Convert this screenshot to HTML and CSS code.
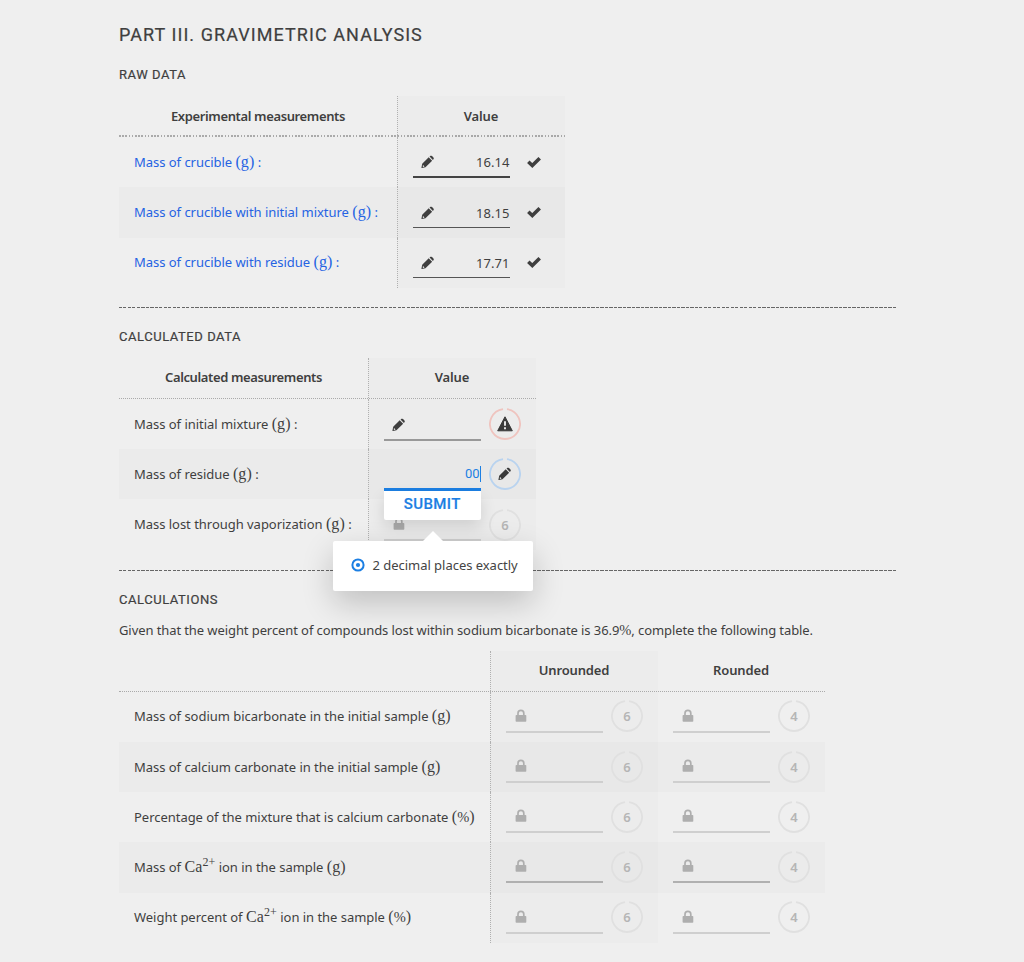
FILE: index.html
```html
<!DOCTYPE html>
<html lang="en">
<head>
<meta charset="utf-8">
<title>Gravimetric Analysis</title>
<link rel="stylesheet" href="styles.css">
</head>
<body>
<svg class="defs" width="0" height="0">
  <symbol id="pencil" viewBox="0 0 14 14"><path fill="currentColor" d="M8.3 2 12 5.7 4.8 12.7 1 13.5Q.4 13.5.5 12.9L1.3 9ZM9.2 1.2 10.2.4Q11.1-.1 11.9.6L13.4 2.1Q14.1 2.9 13.6 3.8L12.8 4.8Z"/><path d="m2.2 10.3 1.6 1.6-1.4.4-.6-.6Z" fill="#eee"/></symbol>
  <symbol id="check" viewBox="0 0 14 12"><path d="M1.3 5.8 5.3 9.5 12.7 2.3" fill="none" stroke="currentColor" stroke-width="3.6"/></symbol>
  <symbol id="lock" viewBox="0 0 12 14"><path d="M3 7V4.2a2.8 2.8 0 0 1 5.8 0V7" fill="none" stroke="currentColor" stroke-width="1.7"/><rect x=".6" y="6" width="10.7" height="6.8" rx=".8" fill="currentColor"/></symbol>
  <symbol id="warn" viewBox="0 0 16 16"><path d="M8 .8 15.3 14.8H.7Z" fill="currentColor" stroke="currentColor" stroke-linejoin="round"/><path d="M8 5.2v4.5M8 11.2v2" stroke="#ededed" stroke-width="1.9"/></symbol>
  <symbol id="ring" viewBox="0 0 32 32"><path d="M18 1.15A15 15 0 1 1 14 1.15" fill="none" stroke="currentColor" stroke-width="1.8"/></symbol>
</svg>
<main class="page">
  <h1 class="title">PART III. GRAVIMETRIC ANALYSIS</h1>

  <section>
    <h2 class="heading">RAW DATA</h2>
    <div class="table table-raw">
      <div class="row head"><div class="label">Experimental measurements</div><div class="value shade">Value</div></div>
      <div class="row"><div class="label link">Mass of crucible <span class="m">(g)</span> :</div><div class="value shade"><span class="field dark"><svg class="pencil"><use href="#pencil"/></svg>16.14</span><span class="badge"><svg class="check"><use href="#check"/></svg></span></div></div>
      <div class="row"><div class="label link">Mass of crucible with initial mixture <span class="m">(g)</span> :</div><div class="value shade"><span class="field thin"><svg class="pencil"><use href="#pencil"/></svg>18.15</span><span class="badge"><svg class="check"><use href="#check"/></svg></span></div></div>
      <div class="row"><div class="label link">Mass of crucible with residue <span class="m">(g)</span> :</div><div class="value shade"><span class="field thin"><svg class="pencil"><use href="#pencil"/></svg>17.71</span><span class="badge"><svg class="check"><use href="#check"/></svg></span></div></div>
    </div>
  </section>

  <section class="section calculated">
    <h2 class="heading">CALCULATED DATA</h2>
    <div class="table table-calc">
      <div class="row head"><div class="label">Calculated measurements</div><div class="value shade">Value</div></div>
      <div class="row"><div class="label">Mass of initial mixture <span class="m">(g)</span> :</div><div class="value shade"><span class="field gray"><svg class="pencil"><use href="#pencil"/></svg></span><span class="badge"><svg class="ring red"><use href="#ring"/></svg><svg class="warn"><use href="#warn"/></svg></span></div></div>
      <div class="row"><div class="label">Mass of residue <span class="m">(g)</span> :</div><div class="value shade"><span class="field active">00<i class="caret"></i>
        <span class="submit">SUBMIT</span>
        <span class="tip"><svg class="target" viewBox="0 0 14 14"><circle cx="7" cy="7" r="5.6" fill="none" stroke="#1c7fe3" stroke-width="2"/><circle cx="7" cy="7" r="2.1" fill="#1c7fe3"/></svg>2 decimal places exactly</span></span><span class="badge"><svg class="ring blue"><use href="#ring"/></svg><svg class="pencil"><use href="#pencil"/></svg></span></div></div>
      <div class="row"><div class="label">Mass lost through vaporization <span class="m">(g)</span> :</div><div class="value shade"><span class="field locked"><svg class="lock"><use href="#lock"/></svg></span><span class="badge"><svg class="ring"><use href="#ring"/></svg>6</span></div></div>
    </div>
  </section>

  <section class="section calculations">
    <h2 class="heading">CALCULATIONS</h2>
    <p class="given">Given that the weight percent of compounds lost within sodium bicarbonate is 36.9<span class="m pct">%</span>, complete the following table.</p>
    <div class="table table-final">
      <div class="row head"><div class="label"></div><div class="value shade">Unrounded</div><div class="value second">Rounded</div></div>
      <div class="row"><div class="label">Mass of sodium bicarbonate in the initial sample <span class="m">(g)</span></div><div class="value shade"><span class="field locked"><svg class="lock"><use href="#lock"/></svg></span><span class="badge"><svg class="ring"><use href="#ring"/></svg>6</span></div><div class="value second"><span class="field locked"><svg class="lock"><use href="#lock"/></svg></span><span class="badge"><svg class="ring"><use href="#ring"/></svg>4</span></div></div>
      <div class="row"><div class="label">Mass of calcium carbonate in the initial sample <span class="m">(g)</span></div><div class="value shade"><span class="field locked"><svg class="lock"><use href="#lock"/></svg></span><span class="badge"><svg class="ring"><use href="#ring"/></svg>6</span></div><div class="value second"><span class="field locked"><svg class="lock"><use href="#lock"/></svg></span><span class="badge"><svg class="ring"><use href="#ring"/></svg>4</span></div></div>
      <div class="row"><div class="label">Percentage of the mixture that is calcium carbonate <span class="m">(<span class="pct">%</span>)</span></div><div class="value shade"><span class="field locked"><svg class="lock"><use href="#lock"/></svg></span><span class="badge"><svg class="ring"><use href="#ring"/></svg>6</span></div><div class="value second"><span class="field locked"><svg class="lock"><use href="#lock"/></svg></span><span class="badge"><svg class="ring"><use href="#ring"/></svg>4</span></div></div>
      <div class="row"><div class="label">Mass of <span class="m">Ca<sup>2+</sup></span> ion in the sample <span class="m">(g)</span></div><div class="value shade"><span class="field locked strong"><svg class="lock"><use href="#lock"/></svg></span><span class="badge"><svg class="ring"><use href="#ring"/></svg>6</span></div><div class="value second"><span class="field locked strong"><svg class="lock"><use href="#lock"/></svg></span><span class="badge"><svg class="ring"><use href="#ring"/></svg>4</span></div></div>
      <div class="row"><div class="label">Weight percent of <span class="m">Ca<sup>2+</sup></span> ion in the sample <span class="m">(<span class="pct">%</span>)</span></div><div class="value shade"><span class="field locked"><svg class="lock"><use href="#lock"/></svg></span><span class="badge"><svg class="ring"><use href="#ring"/></svg>6</span></div><div class="value second"><span class="field locked"><svg class="lock"><use href="#lock"/></svg></span><span class="badge"><svg class="ring"><use href="#ring"/></svg>4</span></div></div>
    </div>
  </section>
</main>
</body>
</html>
```
FILE: styles.css
```css
* { box-sizing: border-box; }
body { margin: 0; background: #efefef; color: #3f3f3f; font: 13px/20px "Noto Sans", sans-serif; }
.defs { position: absolute; }
.page { width: 777px; margin-left: 119px; padding-top: 23px; height: 962px; overflow: visible; }
.title { margin: 0; font: 400 18px/24px Roboto, sans-serif; letter-spacing: 1.07px; -webkit-text-stroke: .2px currentColor; }
.heading { margin: 0; font: 400 13px/18px Roboto, sans-serif; letter-spacing: .55px; -webkit-text-stroke: .2px currentColor; }
.title + section { padding-top: 19px; }
.section { position: relative; }
.section::before { content: ""; display: block; height: 1px; background: repeating-linear-gradient(90deg, #666 0 3px, transparent 3px 4.5px); }
.calculated { margin-top: 19px; height: 263px; }
.section .heading { padding-top: 20px; height: 38px; }
.table { display: flex; flex-direction: column; --label: 278px; margin-top: 12px; }
.table-raw { width: 446px; }
.table-calc { width: 417px; --label: 249px; }
.table-final { width: 706px; --label: 371px; margin-top: 10px; }
.row { display: flex; height: 50.2px; }
.row:nth-child(odd) { background: rgba(0,0,0,.015); }
.head { height: 41.25px; font-weight: 600; border-bottom: 1px dotted #aaa; }
.row.head { background: none; }
.table-final .head { height: 41px; }
.table-raw .head { border-bottom: 0; background: repeating-linear-gradient(90deg, #aaa 0 1.7px, transparent 1.7px 3.2px) bottom / 100% 2px no-repeat; }
.label { width: var(--label); padding: 0 0 1px 15px; display: flex; align-items: center; white-space: pre; letter-spacing: -.03px; }
.head .label { justify-content: center; padding: 0 0 1px; letter-spacing: -.37px; }
.head .value { justify-content: center; padding: 0 1px 1px 0; letter-spacing: -.15px; }
.table-raw .head .label, .table-raw .head .value { padding-bottom: 2px; }
.link { color: #2563e3; }
.value { width: 168px; display: flex; align-items: center; padding: 0 0 1px 15px; }
.second { width: 167px; }
.shade { background: rgba(0,0,0,.012); border-left: 1px dotted #b0b0b0; }
.m { font-family: "Liberation Serif", serif; font-size: 16px; letter-spacing: .1px; }
.pct { font-size: 14.5px; letter-spacing: 0; }
sup { font-size: 12px; line-height: 0; vertical-align: 6px; }
.field { position: relative; width: 96.5px; height: 33px; display: flex; align-items: center; justify-content: flex-end; border-bottom: 2px solid #444; padding-top: 3px; letter-spacing: .05px; }
.thin { border-bottom: 1px solid #555; height: 32px; }
.gray { border-color: #999; }
.locked { border-color: #cfcfcf; color: #aeaeae; }
.strong { border-color: #b0b0b0; }
.field .pencil { margin-right: auto; margin-left: 8px; }
.pencil { width: 13px; height: 14px; }
.field .lock { margin-right: auto; margin-left: 8.5px; margin-top: -2px; }
.lock { width: 12px; height: 14px; }
.badge { position: relative; width: 32px; height: 32px; margin-left: 8.5px; display: flex; align-items: center; justify-content: center; font-weight: 600; color: #b5b5b5; }
.ring { position: absolute; inset: 0; width: 32px; height: 32px; color: #e0e0e0; }
.red { color: #efc4bf; }
.blue { color: #b9d3ef; }
.check { width: 14px; height: 12px; margin-right: 1px; color: #3f3f3f; }
.badge .pencil, .warn { color: #3a3a3a; }
.badge .pencil { margin-right: 2px; }
.warn { width: 16px; height: 16px; margin-top: -1px; margin-right: 1px; }
.table-calc .value { padding-bottom: 0; }
.table-calc .head .value { padding-bottom: 1px; }
.active { color: #1c7fe3; border-bottom: 3px solid #1c7fe3; letter-spacing: -.1px; font-family: Roboto, sans-serif; }
.caret { width: 1px; height: 16px; background: #1c7fe3; }
.submit { position: absolute; z-index: 2; left: 0; top: 100%; margin-top: 3px; width: 96.5px; height: 29px; background: #fff; border-radius: 0 0 2px 2px; box-shadow: 0 7px 16px rgba(0,0,0,.12); display: grid; place-items: center; padding-bottom: 2px; font: 500 15px/20px Roboto, sans-serif; letter-spacing: .4px; -webkit-text-stroke: .2px currentColor; }
.tip { position: absolute; z-index: 2; left: -51.5px; top: 83px; width: 200.5px; height: 50px; background: #fff; border-radius: 2px; box-shadow: 0 12px 32px rgba(0,0,0,.2); color: #444; display: flex; align-items: center; gap: 8px; padding: 0 0 1px 18px; font: 13px/20px "Noto Sans", sans-serif; letter-spacing: -.03px; white-space: nowrap; }
.tip::before { content: ""; position: absolute; left: 90px; top: -10px; border: 10px solid transparent; border-top: 0; border-bottom-color: #fff; }
.target { width: 14px; height: 14px; }
.given { margin: 11px 0 0; line-height: 21px; height: 21px; white-space: nowrap; letter-spacing: -.09px; }
```
